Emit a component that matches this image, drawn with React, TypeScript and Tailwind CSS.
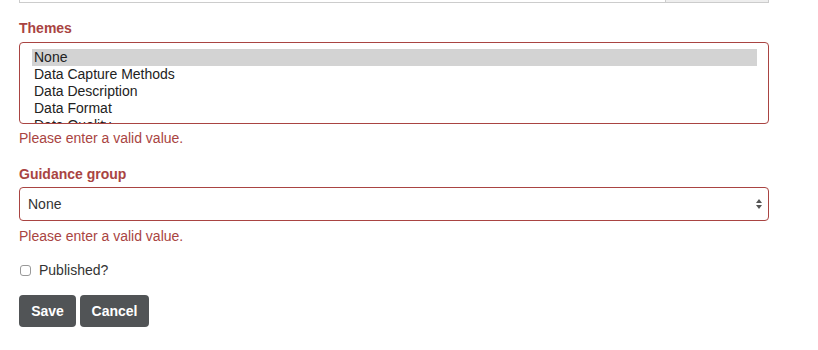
const themes = ['None', 'Data Capture Methods', 'Data Description', 'Data Format', 'Data Quality'];

function ErrorText() {
  return <p className="text-[14px] leading-[20px] text-[#a94442]">Please enter a valid value.</p>;
}

export default function App() {
  return (
    <div className="min-h-screen bg-white pl-[19px] w-[769px] text-[14px] text-[#333]" style={{ fontFamily: '"Liberation Sans", Arial, sans-serif' }}>
      {/* bottom of the field above */}
      <div className="flex h-[3px]">
        <div className="flex-1 border-l border-b border-[#ccc]" />
        <div className="w-[104px] bg-[#eee] border-x border-b border-[#ccc]" />
      </div>

      <label className="block mt-[15px] font-bold leading-[20px] text-[#a94442]">Themes</label>
      <div className="mt-[4px] h-[82px] border border-[#a94442] rounded-[4px] overflow-hidden pt-[6px] pl-[12px] pr-[11px]">
        {themes.map((t, i) => (
          <div key={t} className={`h-[17px] leading-[17px] pl-[2px] text-[#222] ${i === 0 ? 'bg-[#d3d3d3]' : ''}`}>
            {t}
          </div>
        ))}
      </div>
      <div className="mt-[4px]">
        <ErrorText />
      </div>

      <label className="block mt-[16px] font-bold leading-[20px] text-[#a94442]">Guidance group</label>
      <div className="mt-[3px] h-[34px] border border-[#a94442] rounded-[4px] flex items-center justify-between pl-[8px] pr-[4px]">
        <span className="text-[#333]">None</span>
        <svg width="8" height="12" viewBox="0 0 8 12" className="mr-[1px]">
          <path d="M4 1 L7 5 L1 5 Z" fill="#555" />
          <path d="M4 11 L7 7 L1 7 Z" fill="#555" />
        </svg>
      </div>
      <div className="mt-[5px]">
        <ErrorText />
      </div>

      <div className="mt-[14px] flex items-center h-[20px]">
        <span className="w-[11px] h-[11px] ml-[1px] border border-[#999] rounded-[3px] bg-white" />
        <span className="ml-[8px] text-[#333]">Published?</span>
      </div>

      <div className="mt-[15px] flex gap-[4px]">
        <button className="w-[57px] h-[32px] rounded-[4px] bg-[#515456] text-white font-bold">Save</button>
        <button className="w-[69px] h-[32px] rounded-[4px] bg-[#515456] text-white font-bold">Cancel</button>
      </div>
    </div>
  );
}
